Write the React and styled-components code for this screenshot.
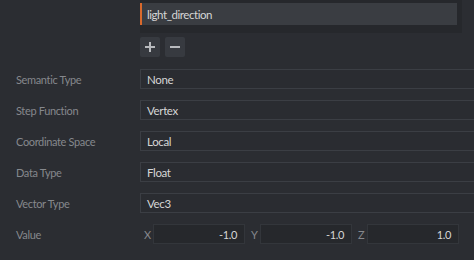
import React from "react";
import styled, { createGlobalStyle } from "styled-components";

const Global = createGlobalStyle`
  html, body { margin: 0; padding: 0; background: #2b2d32; overflow: hidden; }
  body { font-family: "Lato", "Noto Sans", sans-serif; }
`;

const Panel = styled.div`
  width: 474px;
  height: 260px;
  overflow: hidden;
  background: #2b2d32;
  display: flex;
  flex-direction: column;
`;

const Row = styled.div`
  display: grid;
  grid-template-columns: 140px 340px;
  align-items: center;
  height: ${(p) => p.$h || 20}px;
  margin-top: ${(p) => p.$mt || 0}px;
  flex-shrink: 0;
`;

const ListArea = styled.div`
  grid-column: 2;
  width: 322px;
  height: 33px;
  background: #26282c;
  padding: 3px 5px 8px 0;
  box-sizing: border-box;
`;

const ListItem = styled.div`
  height: 22px;
  background: #3a3d42;
  border-left: 2px solid #d9692c;
  box-sizing: border-box;
  display: flex;
  align-items: center;
  padding-left: 5px;
  color: #d6d6d6;
  font-size: 11.5px;
  letter-spacing: -0.45px;
`;

const Buttons = styled.div`
  grid-column: 2;
  display: flex;
  gap: 5px;
`;

const IconButton = styled.button`
  width: 20px;
  height: 20px;
  padding: 0;
  border: none;
  border-radius: 2px;
  background: #373a40;
  display: flex;
  align-items: center;
  justify-content: center;
`;

const Label = styled.div`
  grid-column: 1;
  padding-left: 16px;
  color: #86888d;
  font-size: 11px;
  letter-spacing: -0.35px;
`;

const Field = styled.div`
  grid-column: 2;
  height: 20px;
  box-sizing: border-box;
  border: 1px solid #3b3e44;
  background: #2a2c31;
  display: flex;
  align-items: center;
  padding-left: 6px;
  color: #d6d6d6;
  font-size: 11.5px;
  letter-spacing: -0.35px;
`;

const VectorRow = styled.div`
  grid-column: 2;
  display: flex;
  align-items: center;
  margin-left: 4px;
`;

const Axis = styled.span`
  width: 9px;
  color: #86888d;
  font-size: 11px;
`;

const NumField = styled.div`
  width: 92px;
  height: 20px;
  box-sizing: border-box;
  border: 1px solid #33363b;
  background: #26282c;
  margin-right: 6px;
  display: flex;
  align-items: center;
  justify-content: flex-end;
  padding-right: 7px;
  color: #d6d6d6;
  font-size: 11px;
  letter-spacing: -0.35px;
`;

const rows = [
  ["Semantic Type", "None"],
  ["Step Function", "Vertex"],
  ["Coordinate Space", "Local"],
  ["Data Type", "Float"],
  ["Vector Type", "Vec3"],
];

export default function App() {
  return (
    <>
      <Global />
      <Panel>
        <Row $h={33}>
          <ListArea>
            <ListItem>light_direction</ListItem>
          </ListArea>
        </Row>
        <Row $mt={4}>
          <Buttons>
            <IconButton aria-label="add">
              <svg width="12" height="12" viewBox="0 0 12 12">
                <path d="M6 1v10M1 6h10" stroke="#b8babe" strokeWidth="2" />
              </svg>
            </IconButton>
            <IconButton aria-label="remove">
              <svg width="12" height="12" viewBox="0 0 12 12">
                <path d="M1 6h10" stroke="#b8babe" strokeWidth="2" />
              </svg>
            </IconButton>
          </Buttons>
        </Row>
        {rows.map(([l, v], i) => (
          <Row key={l} $mt={i === 0 ? 12 : 11}>
            <Label>{l}</Label>
            <Field>{v}</Field>
          </Row>
        ))}
        <Row $mt={11}>
          <Label>Value</Label>
          <VectorRow>
            <Axis>X</Axis>
            <NumField>-1.0</NumField>
            <Axis>Y</Axis>
            <NumField>-1.0</NumField>
            <Axis>Z</Axis>
            <NumField>1.0</NumField>
          </VectorRow>
        </Row>
      </Panel>
    </>
  );
}
